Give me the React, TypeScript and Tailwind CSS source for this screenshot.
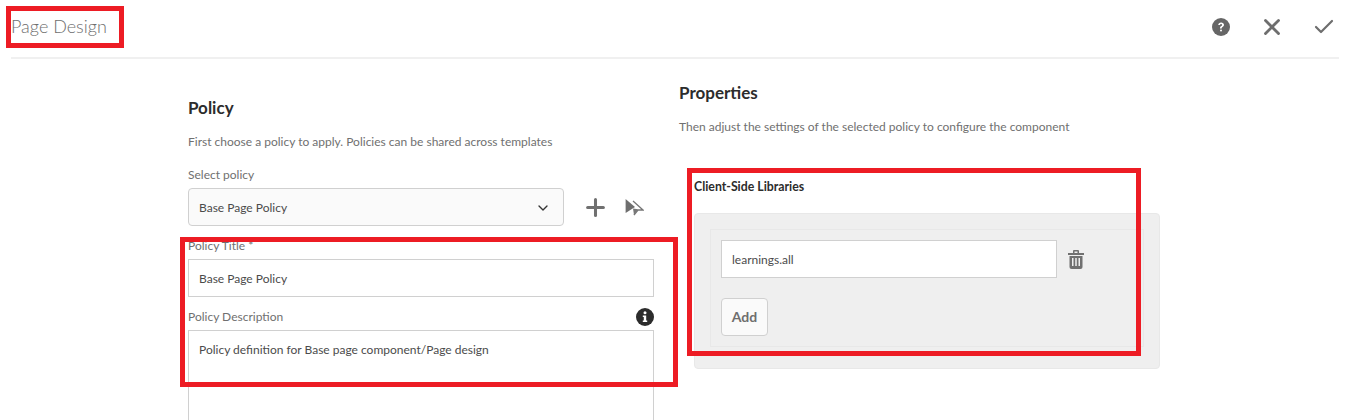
import { ChevronDown, Plus, X, Check } from 'lucide-react';

const font = "font-['Lato',sans-serif]";

function HelpIcon() {
  return (
    <svg width="18" height="18" viewBox="0 0 18 18" aria-hidden="true">
      <circle cx="9" cy="9" r="9" fill="#666" />
      <path d="M6.2 7c.1-1.7 1.3-2.6 2.9-2.6 1.7 0 2.9.9 2.9 2.4 0 1.1-.6 1.7-1.4 2.2-.7.5-.9.8-.9 1.5H8c0-1.2.3-1.8 1.2-2.4.6-.4.9-.7.9-1.2 0-.6-.4-.9-1-.9-.7 0-1.1.4-1.2 1z" fill="#fff" />
      <rect x="8" y="11.6" width="2" height="2" rx="1" fill="#fff" />
    </svg>
  );
}

function InfoIcon() {
  return (
    <svg width="18" height="18" viewBox="0 0 18 18" aria-hidden="true">
      <circle cx="9" cy="9" r="9" fill="#2c2c2c" />
      <circle cx="9" cy="4.8" r="1.5" fill="#fff" />
      <path d="M6.8 7.4h3.4v5.2h1v1.5H6.8v-1.5h1v-3.7h-1z" fill="#fff" />
    </svg>
  );
}

// policy properties arrow next to the plus
function PolicyArrowIcon() {
  return (
    <svg width="19" height="18" viewBox="0 0 19 18" aria-hidden="true">
      <path d="M0.6 1L10 9 0.6 15z" fill="#6e6e6e" />
      <path d="M8 3l10 9h-5l-4 5" fill="none" stroke="#777" strokeWidth="1.3" />
      <path d="M8 10.5l5 .8L9 17z" fill="#777" />
    </svg>
  );
}

function TrashIcon() {
  return (
    <svg width="16" height="20" viewBox="0 0 16 20" aria-hidden="true">
      <path d="M0 4h16v2H0zM5 4V2q0-1 1-1h4q1 0 1 1v2H9.5V2.5h-3V4z" fill="#707070" />
      <path d="M1.5 7h13v11q0 2-2 2h-9q-2 0-2-2z" fill="#707070" />
      <path d="M4 9h1.5v8H4zM7.25 9h1.5v8h-1.5zM10.5 9H12v8h-1.5z" fill="#efefef" />
    </svg>
  );
}

function FieldLabel({ text }: { text: string }) {
  return <div className="text-xs leading-4 text-[#707070]">{text}</div>;
}

function RedBox({ className }: { className: string }) {
  return <div className={`absolute border-[5px] border-[#ed1c24] pointer-events-none ${className}`} />;
}

export default function App() {
  return (
    <div className={`relative h-[420px] overflow-hidden bg-white ${font}`}>
      <header className="ml-[11px] mr-[18px] flex h-[59px] items-center justify-between border-b-2 border-[#f0f0f0] pb-[3px] pr-[3px]">
        <h1 className="-mt-[2px] text-lg font-light text-[#6e6e6e]">Page Design</h1>
        <div className="flex items-center text-[#6e6e6e]">
          <HelpIcon />
          <X className="ml-[29px] h-[26px] w-[26px]" strokeWidth={2.6} />
          <Check className="ml-[27px] h-[24px] w-[24px]" strokeWidth={2.2} />
        </div>
      </header>

      <div className="flex pl-[188px]">
        {/* Policy */}
        <section className="w-[466px] pt-[39px]">
          <h2 className="text-[17px] font-bold leading-5 text-[#2c2c2c]">Policy</h2>
          <p className="mt-[16px] text-xs leading-4 text-[#707070]">First choose a policy to apply. Policies can be shared across templates</p>
          <div className="mt-[17px]">
            <FieldLabel text="Select policy" />
          </div>
          <div className="mt-[5px] flex items-center">
            <div className="flex h-[38px] w-[376px] items-center justify-between rounded border border-[#d0d0d0] bg-[#fafafa] pl-[10px] pr-[12px] pt-[1px] text-xs text-[#4b4b4b]">
              Base Page Policy
              <ChevronDown className="h-4 w-4 text-[#333]" />
            </div>
            <Plus className="ml-[18px] h-[27px] w-[27px] text-[#707070]" strokeWidth={2.7} />
            <div className="ml-[16px]">
              <PolicyArrowIcon />
            </div>
          </div>
          <div className="mt-[12px]">
            <FieldLabel text="Policy Title *" />
          </div>
          <input readOnly value="Base Page Policy" className="mt-[5px] block h-[38px] w-full border border-[#d0d0d0] bg-white px-[10px] text-xs text-[#4b4b4b] outline-none" />
          <div className="mt-[10px] flex h-[20px] items-center justify-between">
            <FieldLabel text="Policy Description" />
            <InfoIcon />
          </div>
          <div className="mt-[3px] h-[120px] border border-[#d0d0d0] bg-white px-[10px] pt-[11px] text-xs leading-4 text-[#4b4b4b]">
            Policy definition for Base page component/Page design
          </div>
        </section>

        {/* Properties */}
        <section className="ml-[25px] w-[481px] pt-[24px]">
          <h2 className="text-[17px] font-bold leading-5 text-[#2c2c2c]">Properties</h2>
          <p className="mt-[16px] text-xs leading-4 text-[#707070]">Then adjust the settings of the selected policy to configure the component</p>
          <div className="ml-[15px] mt-[44px]">
            <div className="text-[12.3px] font-bold leading-4 text-[#2c2c2c]">Client-Side Libraries</div>
            <div className="mt-[18px] h-[156px] rounded border border-[#e8e8e8] bg-[#efefef] p-[15px]">
              <div className="h-[118px] border border-[#e8e8e8] px-[10px] pt-[10px]">
                <div className="flex items-center">
                  <input readOnly value="learnings.all" className="block h-[38px] w-[336px] border border-[#d0d0d0] bg-white px-[10px] text-xs text-[#4b4b4b] outline-none" />
                  <div className="ml-[11px]">
                    <TrashIcon />
                  </div>
                </div>
                <button className="mt-[20px] flex h-[38px] w-[47px] items-center justify-center rounded border border-[#d0d0d0] bg-[#fafafa] pb-[2px] text-[14px] font-bold text-[#6e6e6e]">
                  Add
                </button>
              </div>
            </div>
          </div>
        </section>
      </div>

      {/* annotation boxes */}
      <RedBox className="left-[6px] top-[6px] h-[42px] w-[118px]" />
      <RedBox className="left-[180px] top-[237px] h-[150px] w-[498px]" />
      <RedBox className="left-[687px] top-[168px] h-[188px] w-[454px]" />
    </div>
  );
}
